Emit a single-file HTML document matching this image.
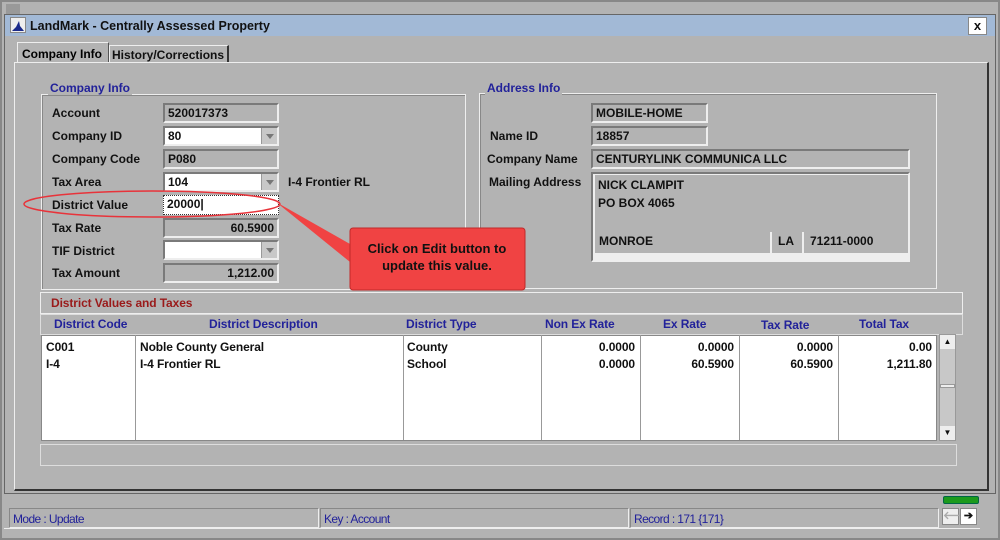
<!DOCTYPE html>
<html><head><style>
*{margin:0;padding:0;box-sizing:border-box}
body{width:1000px;height:540px;background:#b3b3b3;position:relative;overflow:hidden;font-family:"Liberation Sans",sans-serif;font-size:12px;font-weight:bold;color:#111}
.a{position:absolute}
.box{position:absolute;background:#b3b3b3;border:2px solid;border-color:#7a7a7a #eee #eee #7a7a7a;padding:1px 3px;height:20px;line-height:15px;font-size:12px}
.wbox{background:#fff}
.lbl{position:absolute;left:52px;font-size:12px}
.grp{position:absolute;border:1px solid;border-color:#eee #eee #eee #eee;box-shadow:inset 1px 1px 0 #888}
.gt{position:absolute;background:#b3b3b3;color:#22229a;padding:0 2px;font-size:12px}
.dd{position:absolute;right:0;top:0;width:16px;height:16px;background:#c8c8c8;border-left:1px solid #999}
.dd:after{content:"";position:absolute;left:4px;top:6px;border:4px solid transparent;border-top:5px solid #777}
.n{font-family:"Liberation Sans",sans-serif;letter-spacing:-0.1px;font-size:12px}
.th{position:absolute;top:317px;color:#22229a;letter-spacing:-0.1px}
.col{position:absolute;top:335px;height:105px;border-right:1px solid #999}
.st{position:absolute;top:508px;height:20px;border:1px solid;border-color:#888 #eee #eee #888;color:#22229a;font-weight:normal;letter-spacing:-0.6px;padding:3px 3px;font-size:12px}
</style></head><body>
<div class="a" style="left:0;top:0;width:1000px;height:540px;border:2px solid #888"></div>
<div class="a" style="left:6px;top:4px;width:14px;height:12px;background:#999"></div>
<div class="a" style="left:4px;top:14px;width:992px;height:480px;border:1px solid #666;background:#b3b3b3"></div>
<div class="a" style="left:5px;top:15px;width:990px;height:21px;background:#a2b9d6"></div>
<svg class="a" style="left:10px;top:17px" width="16" height="16"><rect x="0.5" y="0.5" width="15" height="15" fill="#eee" stroke="#888"/><path d="M2 14 L6 10 L9 4 L10 9 L14 14Z" fill="#1a2a8a"/></svg>
<div class="a" style="left:30px;top:19px;font-size:12.5px">LandMark - Centrally Assessed Property</div>
<div class="a" style="left:968px;top:17px;width:19px;height:18px;background:#fff;border:1px solid #888;text-align:center;line-height:15px;font-size:13px">x</div>
<div class="a" style="left:17px;top:42px;width:92px;height:21px;border:1px solid #eee;border-bottom:none;border-right:1px solid #555;padding:4px 4px;font-size:12px;color:#000">Company Info</div>
<div class="a" style="left:109px;top:45px;width:120px;height:18px;border:1px solid #eee;border-right:2px solid #333;border-bottom:none;padding:2px 2px;font-size:12px">History/Corrections</div>
<div class="a" style="left:14px;top:62px;width:975px;height:429px;border:1px solid;border-color:#eee #333 #333 #eee;border-width:1px 2px 2px 1px"></div>
<div class="grp" style="left:41px;top:94px;width:425px;height:196px"></div>
<div class="gt" style="left:48px;top:81px">Company Info</div>
<div class="lbl" style="top:106px">Account</div><div class="box" style="left:163px;top:103px;width:116px">520017373</div>
<div class="lbl" style="top:129px">Company ID</div><div class="box wbox" style="left:163px;top:126px;width:116px">80<div class="dd"></div></div>
<div class="lbl" style="top:152px">Company Code</div><div class="box" style="left:163px;top:149px;width:116px">P080</div>
<div class="lbl" style="top:175px">Tax Area</div><div class="box wbox" style="left:163px;top:172px;width:116px">104<div class="dd"></div></div>
<div class="a" style="left:288px;top:175px">I-4 Frontier RL</div>
<div class="lbl" style="top:198px">District Value</div><div class="box wbox" style="left:163px;top:195px;width:116px;border:1px dotted #333">20000|</div>
<div class="lbl" style="top:221px">Tax Rate</div><div class="box" style="left:163px;top:218px;width:116px;text-align:right">60.5900</div>
<div class="lbl" style="top:244px">TIF District</div><div class="box wbox" style="left:163px;top:240px;width:116px"><div class="dd"></div></div>
<div class="lbl" style="top:266px">Tax Amount</div><div class="box" style="left:163px;top:263px;width:116px;text-align:right">1,212.00</div>
<div class="grp" style="left:479px;top:93px;width:458px;height:196px"></div>
<div class="gt" style="left:485px;top:81px">Address Info</div>
<div class="box" style="left:591px;top:103px;width:117px">MOBILE-HOME</div>
<div class="a" style="left:490px;top:129px">Name ID</div><div class="box" style="left:591px;top:126px;width:117px">18857</div>
<div class="a" style="left:487px;top:152px">Company Name</div><div class="box" style="left:591px;top:149px;width:319px">CENTURYLINK COMMUNICA LLC</div>
<div class="a" style="left:489px;top:175px">Mailing Address</div>
<div class="a" style="left:591px;top:172px;width:319px;height:90px;border:2px solid;border-color:#7a7a7a #eee #eee #7a7a7a;background:#eee"></div>
<div class="a" style="left:595px;top:175px;width:313px;height:78px;background:#b3b3b3"></div>
<div class="a" style="left:598px;top:178px">NICK CLAMPIT</div>
<div class="a" style="left:598px;top:196px">PO BOX 4065</div>
<div class="a" style="left:596px;top:232px;width:176px;height:21px;border-right:2px solid #eee;padding:2px 3px">MONROE</div>
<div class="a" style="left:774px;top:232px;width:30px;height:21px;border-right:2px solid #eee;padding:2px 4px">LA</div>
<div class="a" style="left:810px;top:234px">71211-0000</div>
<div class="a" style="left:40px;top:292px;width:923px;height:22px;border:1px solid #eee"></div>
<div class="a n" style="left:51px;top:296px;color:#9a1a1a">District Values and Taxes</div>
<div class="a" style="left:40px;top:314px;width:923px;height:21px;border:1px solid #ddd"></div>
<div class="th" style="left:54px">District Code</div>
<div class="th" style="left:209px">District Description</div>
<div class="th" style="left:406px">District Type</div>
<div class="th" style="left:545px">Non Ex Rate</div>
<div class="th" style="left:663px">Ex Rate</div>
<div class="th" style="left:761px;top:318px">Tax Rate</div>
<div class="th" style="left:859px">Total Tax</div>
<div class="a" style="left:41px;top:335px;width:896px;height:106px;background:#fff;border:1px solid #888"></div>
<div class="col" style="left:42px;width:94px"></div>
<div class="col" style="left:136px;width:268px"></div>
<div class="col" style="left:404px;width:138px"></div>
<div class="col" style="left:542px;width:99px"></div>
<div class="col" style="left:641px;width:99px"></div>
<div class="col" style="left:740px;width:99px"></div>
<div class="a n" style="left:46px;top:339px;line-height:17px">C001<br>I-4</div>
<div class="a n" style="left:140px;top:339px;line-height:17px">Noble County General<br>I-4 Frontier RL</div>
<div class="a n" style="left:407px;top:339px;line-height:17px">County<br>School</div>
<div class="a n" style="left:542px;top:339px;width:93px;text-align:right;line-height:17px">0.0000<br>0.0000</div>
<div class="a n" style="left:641px;top:339px;width:93px;text-align:right;line-height:17px">0.0000<br>60.5900</div>
<div class="a n" style="left:740px;top:339px;width:93px;text-align:right;line-height:17px">0.0000<br>60.5900</div>
<div class="a n" style="left:839px;top:339px;width:93px;text-align:right;line-height:17px">0.00<br>1,211.80</div>
<div class="a" style="left:939px;top:334px;width:17px;height:107px;background:#c8c8c8;border:1px solid #999"></div>
<div class="a" style="left:940px;top:335px;width:15px;height:14px;background:#eee;font-size:8px;text-align:center;line-height:14px">▲</div>
<div class="a" style="left:940px;top:384px;width:15px;height:4px;background:#eee;border:1px solid #999"></div>
<div class="a" style="left:940px;top:426px;width:15px;height:14px;background:#eee;font-size:8px;text-align:center;line-height:14px">▼</div>
<div class="a" style="left:40px;top:444px;width:917px;height:22px;border:1px solid #ddd"></div>
<div class="a" style="left:943px;top:496px;width:36px;height:8px;background:#1c9a1c;border:1px solid #064;border-radius:2px"></div>
<div class="st" style="left:9px;width:310px">Mode : Update</div>
<div class="st" style="left:320px;width:309px">Key : Account</div>
<div class="st" style="left:630px;width:309px">Record : 171 {171}</div>
<div class="a" style="left:942px;top:508px;width:17px;height:17px;background:#eee;border:1px solid #888;color:#aaa;text-align:center;line-height:15px;font-size:11px">🡐</div>
<div class="a" style="left:960px;top:508px;width:17px;height:17px;background:#fff;border:1px solid #888;text-align:center;line-height:15px;font-size:11px">➔</div>
<div class="a" style="left:4px;top:528px;width:976px;height:10px;border-top:1px solid #eee"></div>
<svg class="a" style="left:0;top:0" width="1000" height="540">
<ellipse cx="152" cy="204" rx="128" ry="13" fill="none" stroke="#e8333a" stroke-width="1.5"/>
<polygon points="276,202 350,244 350,262" fill="#f04343"/>
<rect x="350" y="228" width="175" height="62" rx="3" fill="#f04343" stroke="#c02a2a"/>
<text x="437" y="253" text-anchor="middle" font-family="Liberation Sans" font-weight="bold" font-size="13" fill="#111">Click on Edit button to</text>
<text x="437" y="270" text-anchor="middle" font-family="Liberation Sans" font-weight="bold" font-size="13" fill="#111">update this value.</text>
</svg>
</body></html>
